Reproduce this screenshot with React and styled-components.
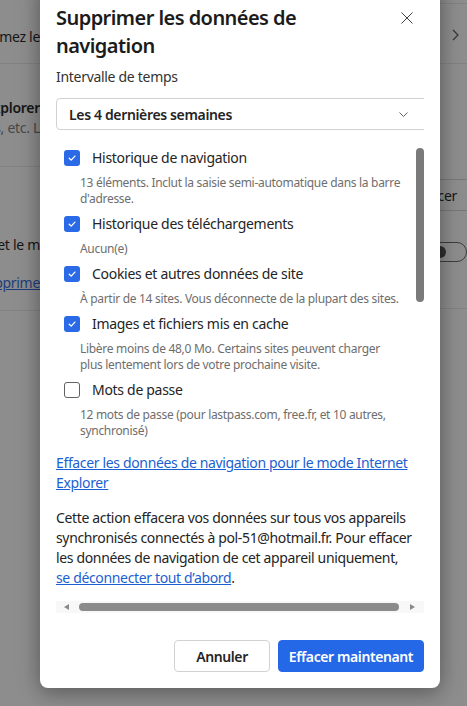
import React from "react";
import styled, { createGlobalStyle } from "styled-components";

const GlobalStyle = createGlobalStyle`
  html, body {
    margin: 0;
    padding: 0;
  }
  body {
    font-family: "Noto Sans", "Open Sans", sans-serif;
    background: #8d8d8d;
  }
`;

const Page = styled.div`
  position: relative;
  width: 467px;
  height: 706px;
  overflow: hidden;
  background: #8d8d8d;
  display: flex;
  justify-content: space-between;
`;

/* ---- dimmed settings page behind the dialog ---- */

const Strip = styled.div`
  width: ${({ $w }) => $w}px;
  display: flex;
  flex-direction: column;
  overflow: hidden;
`;

const Section = styled.div`
  height: ${({ $h }) => $h}px;
  padding-top: ${({ $pt }) => $pt || 0}px;
  box-sizing: border-box;
  border-bottom: ${({ $line }) => ($line ? "1px solid #828282" : "none")};
  flex-shrink: 0;
`;

const Tail = styled.div`
  display: flex;
  justify-content: flex-end;
  white-space: nowrap;
  font-size: 14px;
  line-height: 20px;
  letter-spacing: -0.3px;
  margin-top: ${({ $mt }) => $mt || 0}px;
  color: ${({ $tone }) =>
    $tone === "muted" ? "#474747" : $tone === "link" ? "#1d3d7c" : "#161616"};
  font-weight: ${({ $bold }) => ($bold ? 600 : 400)};
  text-decoration: ${({ $tone }) => ($tone === "link" ? "underline" : "none")};
`;

const ChevronCell = styled.div`
  height: 60px;
  display: flex;
  align-items: center;
  padding-left: 12px;
  padding-top: 2px;
  box-sizing: border-box;
  border-bottom: 1px solid #828282;
`;

const GhostButton = styled.div`
  margin-top: 115px;
  margin-left: -40px;
  width: 100px;
  height: 32px;
  box-sizing: border-box;
  border: 1px solid #777;
  border-radius: 4px;
  display: flex;
  align-items: center;
  justify-content: flex-end;
  padding-right: 42px;
  font-size: 14px;
  letter-spacing: -0.3px;
  color: #161616;
  white-space: nowrap;
`;

const Toggle = styled.div`
  margin-top: 31px;
  margin-left: -13px;
  width: 40px;
  height: 20px;
  box-sizing: border-box;
  border: 1px solid #3d3d3d;
  border-radius: 10px;
  display: flex;
  align-items: center;
  padding-left: 6px;
`;

const Knob = styled.div`
  width: 12px;
  height: 12px;
  border-radius: 50%;
  background: #2e2e2e;
`;

const EndLine = styled.div`
  margin-top: ${({ $mt }) => $mt}px;
  border-bottom: 1px solid #828282;
`;

/* ---- dialog ---- */

const Dialog = styled.div`
  position: absolute;
  left: 40px;
  top: -20px;
  width: 400px;
  box-sizing: border-box;
  padding: 24px 16px 16px;
  background: #fff;
  border-radius: 8px;
  box-shadow: 0 0 24px rgba(0, 0, 0, 0.28), 0 8px 16px rgba(0, 0, 0, 0.14);
  display: flex;
  flex-direction: column;
  color: #242424;
`;

const Header = styled.div`
  display: flex;
  justify-content: space-between;
  align-items: flex-start;
`;

const Title = styled.h2`
  margin: 0;
  max-width: 300px;
  font-size: 20px;
  line-height: 28px;
  font-weight: 600;
  letter-spacing: -0.55px;
  color: #1b1b1b;
`;

const CloseButton = styled.button`
  width: 28px;
  height: 28px;
  margin-right: 3px;
  border: none;
  background: none;
  padding: 0;
  display: flex;
  align-items: center;
  justify-content: center;
  color: #424242;
`;

const Body = styled.div`
  position: relative;
  margin-top: 7px;
  overflow: hidden;
`;

const FieldLabel = styled.div`
  font-size: 14px;
  line-height: 20px;
  letter-spacing: -0.3px;
  color: #333;
`;

const Select = styled.div`
  margin-top: 11px;
  width: calc(100% + 20px);
  height: 32px;
  box-sizing: border-box;
  border: 1px solid #d1d1d1;
  border-radius: 4px;
  display: flex;
  align-items: center;
  padding: 0 35px 0 12px;
  font-size: 14px;
  font-weight: 600;
  letter-spacing: -0.35px;
  color: #242424;
`;

const SelectText = styled.span`
  flex: 1;
`;

const List = styled.div`
  margin-top: 18px;
  padding-left: 8px;
  display: flex;
  flex-direction: column;
  gap: 7px;
`;

const Item = styled.div`
  display: flex;
  flex-direction: column;
  gap: 7px;
`;

const ItemRow = styled.label`
  display: flex;
  align-items: center;
  gap: 12px;
  font-size: 14px;
  line-height: 20px;
  letter-spacing: -0.3px;
  color: #242424;
`;

const Box = styled.span`
  width: 16px;
  height: 16px;
  box-sizing: border-box;
  border-radius: 3px;
  flex-shrink: 0;
  display: flex;
  align-items: center;
  justify-content: center;
  background: ${({ $checked }) => ($checked ? "#2a6ae6" : "#fff")};
  border: ${({ $checked }) => ($checked ? "none" : "1px solid #616161")};
`;

const Desc = styled.div`
  padding-left: 16px;
  font-size: 12px;
  line-height: 16px;
  letter-spacing: -0.3px;
  color: #6e6e6e;
  white-space: nowrap;
`;

const BlockLink = styled.a`
  display: block;
  margin-top: 14px;
  font-size: 14px;
  line-height: 20px;
  letter-spacing: -0.35px;
  color: #1b5fd0;
  text-decoration: underline;
  white-space: nowrap;
`;

const Paragraph = styled.p`
  margin: 15px 0 0;
  font-size: 14px;
  line-height: 20px;
  letter-spacing: -0.35px;
  color: #242424;
  white-space: nowrap;
`;

const InlineLink = styled.a`
  color: #1b5fd0;
  text-decoration: underline;
`;

const VThumb = styled.div`
  position: absolute;
  right: 0;
  top: 81px;
  width: 8px;
  height: 154px;
  border-radius: 4px;
  background: #7a7a7a;
`;

const HScroll = styled.div`
  margin-top: 13px;
  height: 12px;
  background: #f8f8f8;
  display: flex;
  align-items: center;
  padding: 0 9px 0 8px;
`;

const Arrow = styled.span`
  width: 0;
  height: 0;
  border-top: 3.5px solid transparent;
  border-bottom: 3.5px solid transparent;
  ${({ $dir }) =>
    $dir === "left"
      ? "border-right: 5px solid #8a8a8a; margin-right: 10px;"
      : "border-left: 5px solid #8a8a8a; margin-left: auto;"}
`;

const HThumb = styled.div`
  width: 320px;
  height: 8px;
  border-radius: 4px;
  background: #8b8b8b;
`;

const Footer = styled.div`
  margin-top: 27px;
  display: flex;
  justify-content: flex-end;
  gap: 8px;
`;

const Button = styled.button`
  height: 32px;
  width: ${({ $w }) => $w}px;
  box-sizing: border-box;
  border-radius: 4px;
  font-family: inherit;
  font-size: 14px;
  font-weight: 600;
  letter-spacing: -0.4px;
  border: 1px solid ${({ $primary }) => ($primary ? "#2468e8" : "#d1d1d1")};
  background: ${({ $primary }) => ($primary ? "#2468e8" : "#fff")};
  color: ${({ $primary }) => ($primary ? "#fff" : "#242424")};
`;

const Check = () => (
  <svg width="10" height="10" viewBox="0 0 10 10" fill="none">
    <path d="M2.2 5.2 L4.2 7.1 L7.9 3.1" stroke="#fff" strokeWidth="1.3" strokeLinecap="round" strokeLinejoin="round" />
  </svg>
);

const items = [
  {
    label: "Historique de navigation",
    checked: true,
    desc: ["13 éléments. Inclut la saisie semi-automatique dans la barre", "d'adresse."],
  },
  { label: "Historique des téléchargements", checked: true, desc: ["Aucun(e)"] },
  {
    label: "Cookies et autres données de site",
    checked: true,
    desc: ["À partir de 14 sites. Vous déconnecte de la plupart des sites."],
  },
  {
    label: "Images et fichiers mis en cache",
    checked: true,
    desc: ["Libère moins de 48,0 Mo. Certains sites peuvent charger", "plus lentement lors de votre prochaine visite."],
  },
  {
    label: "Mots de passe",
    checked: false,
    desc: ["12 mots de passe (pour lastpass.com, free.fr, et 10 autres,", "synchronisé)"],
  },
];

export default function App() {
  return (
    <Page>
      <GlobalStyle />
      <Strip $w={40}>
        <Section $h={64} $pt={27} $line>
          <Tail>Confirmez le</Tail>
        </Section>
        <Section $h={103} $pt={34} $line>
          <Tail $bold>Internet Explorer</Tail>
          <Tail $tone="muted">cookies, etc. L</Tail>
        </Section>
        <Section $h={144} $pt={68} $line>
          <Tail>Windows et le m</Tail>
          <Tail $tone="link" $mt={18}>Supprime</Tail>
        </Section>
      </Strip>

      <Strip $w={27}>
        <Section $h={4} $line />
        <ChevronCell>
          <svg width="7" height="12" viewBox="0 0 7 12" fill="none">
            <path d="M1 1 L6 6 L1 11" stroke="#333" strokeWidth="1.2" />
          </svg>
        </ChevronCell>
        <GhostButton>Effacer</GhostButton>
        <Toggle>
          <Knob />
        </Toggle>
        <EndLine $mt={46} />
      </Strip>

      <Dialog role="dialog">
        <Header>
          <Title>Supprimer les données de navigation</Title>
          <CloseButton aria-label="Fermer">
            <svg width="12" height="12" viewBox="0 0 12 12" fill="none">
              <path d="M0.5 0.5 L11.5 11.5 M11.5 0.5 L0.5 11.5" stroke="#424242" strokeWidth="1" />
            </svg>
          </CloseButton>
        </Header>

        <Body>
          <FieldLabel>Intervalle de temps</FieldLabel>
          <Select>
            <SelectText>Les 4 dernières semaines</SelectText>
            <svg width="9" height="5" viewBox="0 0 9 5" fill="none">
              <path d="M0.5 0.5 L4.5 4.5 L8.5 0.5" stroke="#616161" strokeWidth="1" />
            </svg>
          </Select>

          <List>
            {items.map((it) => (
              <Item key={it.label}>
                <ItemRow>
                  <Box $checked={it.checked}>{it.checked && <Check />}</Box>
                  {it.label}
                </ItemRow>
                <Desc>
                  {it.desc.map((line, i) => (
                    <div key={i}>{line}</div>
                  ))}
                </Desc>
              </Item>
            ))}
          </List>

          <BlockLink href="#">
            Effacer les données de navigation pour le mode Internet
            <br />
            Explorer
          </BlockLink>

          <Paragraph>
            Cette action effacera vos données sur tous vos appareils
            <br />
            synchronisés connectés à pol-51@hotmail.fr. Pour effacer
            <br />
            les données de navigation de cet appareil uniquement,
            <br />
            <InlineLink href="#">se déconnecter tout d’abord</InlineLink>.
          </Paragraph>

          <VThumb />
        </Body>

        <HScroll>
          <Arrow $dir="left" />
          <HThumb />
          <Arrow $dir="right" />
        </HScroll>

        <Footer>
          <Button $w={96}>Annuler</Button>
          <Button $w={146} $primary>
            Effacer maintenant
          </Button>
        </Footer>
      </Dialog>
    </Page>
  );
}
